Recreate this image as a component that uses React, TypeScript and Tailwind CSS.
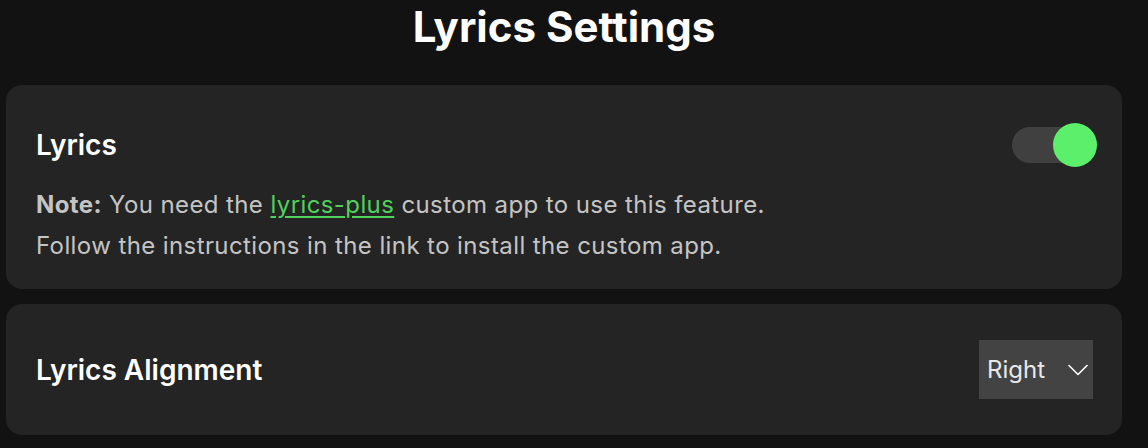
const font = { fontFamily: "Inter, 'Noto Sans', sans-serif" }

function Toggle({ on }: { on: boolean }) {
  return (
    <div className="relative w-[85px] h-[44px] shrink-0">
      <div className="absolute left-0 top-[4px] w-[76px] h-[36px] rounded-full bg-[#404040]" />
      <div
        className={
          on
            ? "absolute right-0 top-0 w-[44px] h-[44px] rounded-full bg-[#5bef6b]"
            : "absolute left-0 top-0 w-[44px] h-[44px] rounded-full bg-[#b3b3b3]"
        }
      />
    </div>
  )
}

export default function App() {
  return (
    <div className="min-h-screen bg-[#121212] pl-[6px] pr-[26px]" style={font}>
      {/* Header */}
      <h1 className="text-center text-[42px] leading-[53px] font-bold text-white">Lyrics Settings</h1>

      <div className="mt-[32px] flex flex-col gap-[15px]">
        {/* Lyrics toggle */}
        <div className="rounded-[16px] bg-[#242424] pl-[30px] pr-[25px] pt-[38px] pb-[23px]">
          <div className="flex items-center justify-between">
            <div className="text-[28px] leading-[28px] font-semibold text-white">Lyrics</div>
            <Toggle on={true} />
          </div>
          <div className="mt-[17px] text-[24px] leading-[41px] tracking-[0.4px] text-[#c4c4c4]">
            <div>
              <span className="font-bold">Note:</span> You need the{" "}
              <a href="#" className="text-[#4fd15c] underline underline-offset-[3px]">
                lyrics-plus
              </a>{" "}
              custom app to use this feature.
            </div>
            <div>Follow the instructions in the link to install the custom app.</div>
          </div>
        </div>

        {/* Lyrics alignment */}
        <div className="h-[131px] rounded-[16px] bg-[#242424] pl-[30px] pr-[29px] flex items-center justify-between">
          <div className="text-[28px] leading-[28px] font-semibold text-white">Lyrics Alignment</div>
          <div className="w-[114px] h-[59px] bg-[#434343] flex items-center justify-between pl-[8px] pr-[5px]">
            <span className="text-[24px] text-[#e8e8e8]">Right</span>
            <svg width="20" height="12" viewBox="0 0 20 12" fill="none">
              <polyline points="1,1.5 10,10.5 19,1.5" stroke="white" strokeWidth="1.6" strokeLinecap="round" strokeLinejoin="round" />
            </svg>
          </div>
        </div>
      </div>
    </div>
  )
}
